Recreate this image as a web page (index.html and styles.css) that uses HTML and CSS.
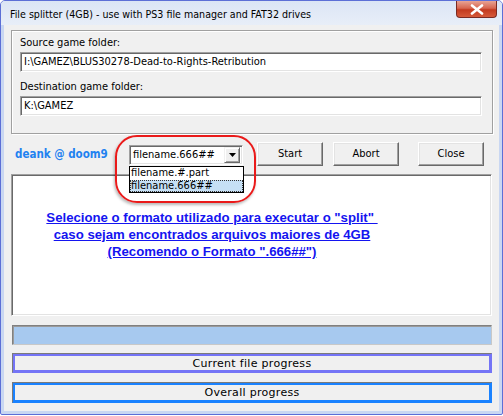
FILE: index.html
```html
<!DOCTYPE html>
<html>
<head>
<meta charset="utf-8">
<link rel="stylesheet" href="styles.css">
</head>
<body>
<div class="win">
  <div class="titlebar">
    <span class="title">File splitter (4GB) - use with PS3 file manager and FAT32 drives</span>
    <div class="close-x">
      <svg width="16" height="11" viewBox="0 0 16 11"><path d="M3 1.5 L13 9.5 M13 1.5 L3 9.5" stroke="#fff" stroke-width="2.6" stroke-linecap="round"/></svg>
    </div>
  </div>
  <div class="client">
    <div class="group">
      <div class="lbl">Source game folder:</div>
      <div class="input">I:\GAMEZ\BLUS30278-Dead-to-Rights-Retribution</div>
      <div class="lbl lbl2">Destination game folder:</div>
      <div class="input">K:\GAMEZ</div>
    </div>
    <div class="row">
      <div class="author">deank @ doom9</div>
      <div class="combo">
        <span class="combo-text">filename.666##</span>
        <div class="arrow"><svg width="7" height="4" viewBox="0 0 7 4"><path d="M0 0 H7 L3.5 4 Z" fill="#000"/></svg></div>
      </div>
      <div class="btn btn-start">Start</div>
      <div class="btn btn-abort">Abort</div>
      <div class="btn btn-close">Close</div>
      <div class="droplist">
        <div class="opt">filename.#.part</div>
        <div class="opt sel">filename.666##</div>
      </div>
      <div class="mark"></div>
    </div>
    <div class="panel">
      <div class="msg">Selecione o formato utilizado para executar o "split"&nbsp;<br>caso sejam encontrados arquivos maiores de 4GB<br>(Recomendo o Formato ".666##")</div>
    </div>
    <div class="pbar"></div>
    <div class="pbox cur">Current file progress</div>
    <div class="pbox all">Overall progress</div>
  </div>
</div>
</body>
</html>
```
FILE: styles.css
```css
html, body {
  margin: 0;
  padding: 0;
  background: #ffffff;
}
body {
  font-family: "DejaVu Sans Condensed", "DejaVu Sans", sans-serif;
  font-stretch: condensed;
  font-size: 11px;
  color: #000;
}
.win {
  width: 503px;
  height: 415px;
  box-sizing: border-box;
  border: 1px solid #5c6fd6;
  border-radius: 5px 5px 2px 2px;
  background: #f0f0f0;
  box-shadow: inset 0 0 0 3px #c9d7f2;
  overflow: hidden;
}
.titlebar {
  height: 24px;
  display: flex;
  align-items: flex-start;
  background: linear-gradient(#dbe5f5, #e8eef8);
}
.title {
  margin: 6px 0 0 9px;
  font-size: 10.6px;
  line-height: 14px;
  color: #000;
}
.close-x {
  margin: 0 5px 0 auto;
  width: 41px;
  height: 17px;
  box-sizing: border-box;
  border: 1px solid #7a2a22;
  border-top: none;
  border-radius: 0 0 4px 4px;
  background: linear-gradient(#e8a394 0%, #d7664f 45%, #c23a1f 55%, #d65a3a 100%);
  display: flex;
  align-items: center;
  justify-content: center;
}
.client {
  padding: 5px 9px 0 10px;
}
.group {
  width: 482px;
  height: 104px;
  box-sizing: border-box;
  border: 1px solid #a0a0a0;
  box-shadow: 1px 1px 0 #fff, inset 1px 1px 0 #fff;
  padding: 5px 10px 0 8px;
}
.lbl {
  line-height: 14px;
  height: 14px;
  margin-bottom: 2px;
}
.lbl2 {
  margin-top: 8px;
}
.input {
  width: 462px;
  height: 20px;
  box-sizing: border-box;
  background: #fff;
  border: 1px solid;
  border-color: #a0a0a0 #fff #fff #a0a0a0;
  box-shadow: inset 1px 1px 0 #696969, inset -1px -1px 0 #e3e3e3;
  padding: 0 0 0 3px;
  line-height: 18px;
  white-space: nowrap;
}
.row {
  position: relative;
  margin-top: 8px;
  height: 24px;
  display: flex;
  align-items: flex-start;
}
.author {
  width: 114px;
  margin-left: 4px;
  margin-top: 4px;
  font-weight: bold;
  font-size: 11.5px;
  line-height: 16px;
  color: #1f82f0;
}
.combo {
  width: 114px;
  height: 20px;
  margin-top: 3px;
  box-sizing: border-box;
  background: #fff;
  border: 1px solid;
  border-color: #a0a0a0 #fff #fff #a0a0a0;
  box-shadow: inset 1px 1px 0 #696969, inset -1px -1px 0 #e3e3e3;
  display: flex;
  align-items: center;
  padding: 2px 2px 2px 3px;
}
.combo-text {
  flex: 1;
  line-height: 16px;
}
.arrow {
  width: 16px;
  height: 16px;
  box-sizing: border-box;
  background: #f0f0f0;
  border: 1px solid;
  border-color: #f0f0f0 #696969 #696969 #f0f0f0;
  box-shadow: inset 1px 1px 0 #fff, inset -1px -1px 0 #a0a0a0;
  display: flex;
  align-items: center;
  justify-content: center;
}
.btn {
  width: 66px;
  height: 24px;
  box-sizing: border-box;
  border: 1px solid;
  border-color: #fff #696969 #696969 #fff;
  box-shadow: inset -1px -1px 0 #a0a0a0, inset 1px 1px 0 #e3e3e3;
  background: #f0f0f0;
  text-align: center;
  line-height: 21px;
}
.btn-start { margin-left: 14px; }
.btn-abort { margin-left: 10px; }
.btn-close { margin-left: 19px; }
.droplist {
  position: absolute;
  left: 118px;
  top: 24px;
  width: 115px;
  height: 27px;
  box-sizing: border-box;
  border: 1px solid #000;
  background: #fff;
  z-index: 2;
}
.opt {
  height: 12px;
  line-height: 12px;
  padding-left: 1px;
}
.opt.sel {
  margin-top: 1px;
  background: #c6e0f5;
  outline: 1px dotted #333;
  outline-offset: -1px;
}
.mark {
  position: absolute;
  left: 104px;
  top: -7px;
  width: 141px;
  height: 68px;
  box-sizing: border-box;
  border: 2px solid #ea1a1a;
  border-radius: 22px;
  box-shadow: -1px 2px 3px rgba(0, 0, 0, 0.28);
  z-index: 3;
}
.panel {
  margin-top: 8px;
  width: 481px;
  height: 142px;
  box-sizing: border-box;
  background: #fff;
  border: 1px solid;
  border-color: #a0a0a0 #fff #fff #a0a0a0;
  box-shadow: inset 1px 1px 0 #696969, inset -1px -1px 0 #e3e3e3;
  padding: 34px 0 0 16px;
}
.msg {
  width: 368px;
  text-align: center;
  font-family: "Liberation Sans", Arial, sans-serif;
  font-stretch: normal;
  font-weight: bold;
  font-size: 13.2px;
  line-height: 17px;
  color: #1414f0;
  text-decoration: underline;
  white-space: nowrap;
}
.pbar {
  margin: 9px 0 0 1px;
  width: 480px;
  height: 20px;
  box-sizing: border-box;
  border: 1px solid;
  border-color: #808080 #c8c8c8 #c8c8c8 #808080;
  box-shadow: inset 1px 1px 0 #9a9a9a;
  background: #a7c9ef;
}
.pbox {
  margin: 8px 0 0 1px;
  width: 480px;
  height: 20px;
  box-sizing: border-box;
  border: 1px solid #7a7a7a;
  background: #f0f0f0;
  text-align: center;
  line-height: 19px;
  font-family: "DejaVu Sans", sans-serif;
  font-stretch: normal;
  letter-spacing: 0.3px;
}
.pbox.cur {
  border-color: #7a7a7a #7474f6 #7474f6 #7a7a7a;
  box-shadow: inset 0 0 0 2px #7474f6;
}
.pbox.all {
  margin-top: 9px;
  height: 21px;
  border-color: #7a7a7a #1a82ff #1a82ff #7a7a7a;
  box-shadow: inset 0 0 0 2px #1a82ff;
  line-height: 20px;
}
```
